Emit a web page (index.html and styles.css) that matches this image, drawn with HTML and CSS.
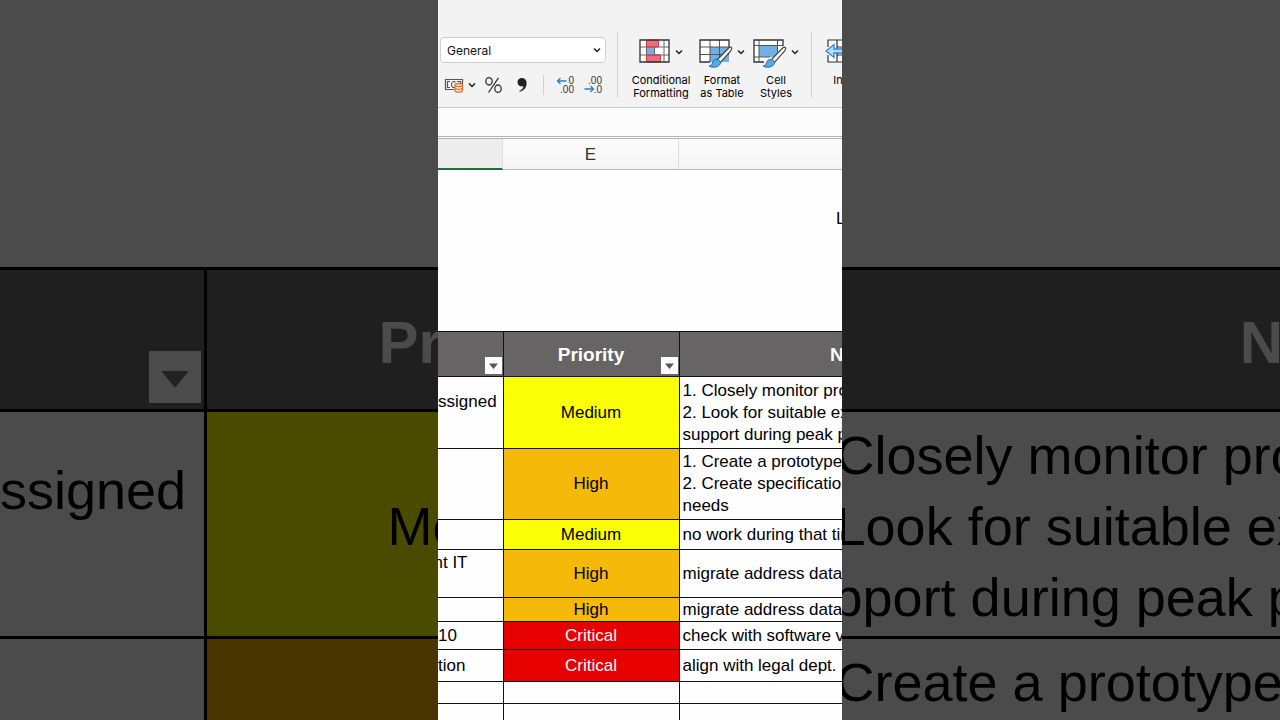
FILE: index.html
```html
<!DOCTYPE html>
<html lang="en">
<head>
    <meta charset="UTF-8">
    <meta name="viewport" content="width=device-width, initial-scale=1.0">
    <title>Risk Register</title>
    <link rel="stylesheet" href="styles.css">
</head>
<body>
    <!-- enlarged, dimmed copy of the sheet -->
    <div class="backdrop" aria-hidden="true">
        <table class="grid big">
            <colgroup><col class="col-d"><col class="col-e"><col class="col-f"></colgroup>
            <tr class="head">
                <th><span class="filter"><svg viewBox="0 0 17 17"><path d="M4 6.500h9L8.500 12z"/></svg></span></th>
                <th>Priority</th>
                <th>Notes</th>
            </tr>
            <tr class="r72">
                <td>ssigned<br>&nbsp;</td>
                <td class="medium">Medium</td>
                <td class="note">1. Closely monitor pro<br>2. Look for suitable ex<br>support during peak p</td>
            </tr>
            <tr class="r71">
                <td></td>
                <td class="high"></td>
                <td class="note">1. Create a prototype<br>&nbsp;<br>&nbsp;</td>
            </tr>
        </table>
    </div>

    <main class="stage">
        <div class="ribbon">
            <div class="number-group">
                <div class="select-box">
                    <select aria-label="Number format">
                        <option>General</option>
                    </select>
                    <svg class="chev" viewBox="0 0 8 8"><path d="M1 2.500l3 3 3-3"/></svg>
                </div>
                <div class="number-tools">
                    <button class="tool money" aria-label="Accounting format">
                        <svg width="20" height="16" viewBox="0 0 20 16" fill="none">
                            <path d="M10 12.500H1.500v-10h17V7" stroke="#555" stroke-width="1.200"/>
                            <path d="M6 4.500H3.500v6H6M11.500 5.200C9.500 3.800 7.500 5 7.500 7.500s1.500 3.500 3 2.800M13 4.500h3.500V7" stroke="#555" stroke-width="1.100"/>
                            <path d="M11 8v5.500c0 2.200 7.500 2.200 7.500 0V8" fill="#fbe9dc" stroke="#e0722e" stroke-width="1.300"/>
                            <ellipse cx="14.750" cy="8" rx="3.750" ry="1.500" fill="#fbe9dc" stroke="#e0722e" stroke-width="1.300"/>
                            <path d="M11 10.800c0 2 7.500 2 7.500 0" stroke="#e0722e" stroke-width="1.200"/>
                        </svg>
                        <svg class="chev" viewBox="0 0 8 8"><path d="M1 2.500l3 3 3-3"/></svg>
                    </button>
                    <button class="tool" aria-label="Percent">
                        <svg width="18" height="18" viewBox="0 0 18 18" fill="none" stroke="#333" stroke-width="1.300">
                            <ellipse cx="5" cy="5.300" rx="3.200" ry="3.700"/><ellipse cx="14" cy="12.700" rx="3.200" ry="3.700"/><path d="M14.500 1.800L4.500 16.500"/>
                        </svg>
                    </button>
                    <button class="tool comma" aria-label="Comma style">
                        <svg width="12" height="16" viewBox="0 0 12 16">
                            <path d="M5.700 1C8.800 1 10.600 3.200 10.600 6.200c0 4.300-2.700 7.300-7 8.600l-.4-.9c2.600-1 4.100-2.700 4.300-4.900-.5.300-1.100.4-1.800.4C3.200 9.400 1.500 7.600 1.500 5.300 1.500 2.800 3.300 1 5.700 1z" fill="#222"/>
                        </svg>
                    </button>
                    <span class="tool-sep"></span>
                    <button class="tool decimal" aria-label="Increase decimal">
                        <span class="digits">0<br>.00</span>
                        <svg class="arrow-up" width="11" height="8" viewBox="0 0 11 8"><path d="M10.500 4H1.500M4.500 1l-3 3 3 3"/></svg>
                    </button>
                    <button class="tool decimal" aria-label="Decrease decimal">
                        <span class="digits">.00<br>.0</span>
                        <svg class="arrow-down" width="11" height="8" viewBox="0 0 11 8"><path d="M.5 4h9M6.500 1l3 3-3 3"/></svg>
                    </button>
                </div>
            </div>
            <div class="style-group">
                <button class="big-btn cond">
                    <span class="icon-row">
                        <svg width="32" height="32" viewBox="0 0 32 32" fill="none">
                            <path d="M1 3h29v22H1z" fill="#fff"/>
                            <path d="M7.500 3h12v7h-12zM7.500 18h14v7h-14z" fill="#ef6a7c"/>
                            <path d="M7.500 10h8v8h-8z" fill="#6fb1e6"/>
                            <path d="M19.500 3v7H30M15.500 10v8H30M21.500 18v7M1 10h18.500M1 18h20.500M7.500 3v22M25 3v22" stroke="#666" stroke-width="1"/>
                            <path d="M7.500 3h12v7h-12zM7.500 18h14v7h-14z" stroke="#d43c50" stroke-width="1"/>
                            <path d="M1 3h29v22H1z" stroke="#333" stroke-width="1.300"/>
                        </svg>
                        <svg class="chev" viewBox="0 0 8 8"><path d="M1 2.500l3 3 3-3"/></svg>
                    </span>
                    Conditional<br>Formatting
                </button>
                <button class="big-btn">
                    <span class="icon-row">
                        <svg width="34" height="32" viewBox="0 0 34 32" fill="none">
                            <path d="M1 3h29v22H1z" fill="#fff"/>
                            <path d="M11 10h19v15H11z" fill="#6fb1e6"/>
                            <path d="M11 3v22M20.500 3v22M1 10h29M1 17.500h29" stroke="#555" stroke-width="1"/>
                            <path d="M30 10V3H1v22h10" stroke="#333" stroke-width="1.300"/>
                            <path d="M32.300 10.500c-1.300-.9-2.700.4-3.600 1.500L18 23l3.200 2.700L31.300 14.500c.9-1.300 2-3.200 1-4z" fill="#fff" stroke="#444" stroke-width="1.200"/>
                            <path d="M17.800 22.500c-2.500-.3-4 1.300-4.300 3.300-.2 1.700-1.500 2.800-3.500 3.200 3.500 2 9.500 1.800 11.500-2.500.7-2-1.500-3.800-3.700-4z" fill="#5ba7e2" stroke="#1c70b8" stroke-width="1"/>
                        </svg>
                        <svg class="chev" viewBox="0 0 8 8"><path d="M1 2.500l3 3 3-3"/></svg>
                    </span>
                    Format<br>as Table
                </button>
                <button class="big-btn">
                    <span class="icon-row">
                        <svg width="34" height="32" viewBox="0 0 34 32" fill="none">
                            <path d="M1 3h29v22H1z" fill="#fff"/>
                            <path d="M6 8.500h18.500V20H6z" fill="#6fb1e6"/>
                            <path d="M6 3v22M24.500 3v12M1 8.500h29M1 20h16" stroke="#555" stroke-width="1"/>
                            <path d="M30 9V3H1v22h10" stroke="#333" stroke-width="1.300"/>
                            <path d="M32.300 10.500c-1.300-.9-2.700.4-3.600 1.500L18 23l3.200 2.700L31.300 14.500c.9-1.300 2-3.200 1-4z" fill="#fff" stroke="#444" stroke-width="1.200"/>
                            <path d="M17.800 22.500c-2.500-.3-4 1.300-4.300 3.300-.2 1.700-1.500 2.800-3.500 3.200 3.500 2 9.500 1.800 11.500-2.500.7-2-1.500-3.800-3.700-4z" fill="#5ba7e2" stroke="#1c70b8" stroke-width="1"/>
                        </svg>
                        <svg class="chev" viewBox="0 0 8 8"><path d="M1 2.500l3 3 3-3"/></svg>
                    </span>
                    Cell<br>Styles
                </button>
            </div>
            <div class="cells-group">
                <button class="big-btn">
                    <span class="icon-row">
                        <svg width="34" height="32" viewBox="0 0 34 32" fill="none">
                            <path d="M3 3h29v22H3z" fill="#fff"/>
                            <path d="M3 10V3h29v22H3v-7M12 3v22M22 3v22M12 10h20M12 18h20" stroke="#333" stroke-width="1.200"/>
                            <path d="M1 14l8-6.500v4.500h16v4H9v4.500z" fill="#b9dcf7" stroke="#2e86cf" stroke-width="1.300"/>
                        </svg>
                        <svg class="chev" viewBox="0 0 8 8"><path d="M1 2.500l3 3 3-3"/></svg>
                    </span>
                    Insert
                </button>
            </div>
        </div>

        <div class="formula-bar"></div>

        <div class="col-heads">
            <div class="active"></div>
            <div>E</div>
            <div></div>
        </div>

        <table class="grid sheet">
            <colgroup><col class="col-d"><col class="col-e"><col class="col-f"></colgroup>
            <tr class="title-row"><td colspan="2"></td><td class="title">L</td></tr>
            <tr class="spacer-row"><td colspan="3"></td></tr>
            <tr class="head">
                <th><button class="filter" aria-label="Filter"><svg viewBox="0 0 17 17"><path d="M4 6.500h9L8.500 12z"/></svg></button></th>
                <th>Priority<button class="filter" aria-label="Filter priority"><svg viewBox="0 0 17 17"><path d="M4 6.500h9L8.500 12z"/></svg></button></th>
                <th>Notes</th>
            </tr>
            <tr class="r72">
                <td>ssigned<br>&nbsp;</td>
                <td class="medium">Medium</td>
                <td class="note">1. Closely monitor pro<br>2. Look for suitable ex<br>support during peak p</td>
            </tr>
            <tr class="r71">
                <td></td>
                <td class="high">High</td>
                <td class="note">1. Create a prototype<br>2. Create specificatio<br>needs</td>
            </tr>
            <tr class="r30">
                <td></td>
                <td class="medium">Medium</td>
                <td class="note">no work during that tim</td>
            </tr>
            <tr class="r48">
                <td class="cut">nt IT<br>&nbsp;</td>
                <td class="high">High</td>
                <td class="note">migrate address data</td>
            </tr>
            <tr class="r24">
                <td></td>
                <td class="high">High</td>
                <td class="note">migrate address data</td>
            </tr>
            <tr class="r28">
                <td>10</td>
                <td class="critical">Critical</td>
                <td class="note">check with software v</td>
            </tr>
            <tr class="r32">
                <td>tion</td>
                <td class="critical">Critical</td>
                <td class="note">align with legal dept.</td>
            </tr>
            <tr class="r22"><td></td><td></td><td></td></tr>
            <tr class="r24"><td></td><td></td><td></td></tr>
        </table>
    </main>
</body>
</html>
```
FILE: styles.css
```css
* {
    box-sizing: border-box;
}
body {
    margin: 0;
    height: 100vh;
    overflow: hidden;
    position: relative;
    display: grid;
    grid-template-columns: 438fr 404fr 438fr;
    background: #4b4b4b;
    font-family: "Liberation Sans", Arial, sans-serif;
    color: #000;
}
button {
    font: inherit;
    color: inherit;
    background: none;
    border: none;
    padding: 0;
    cursor: pointer;
}

/* tables */
.grid {
    table-layout: fixed;
    border-collapse: collapse;
}
.grid th, .grid td {
    position: relative;
    padding: 1px 0 0;
    border: 1px solid #111;
    white-space: nowrap;
    text-align: center;
}
.grid th { padding-top: 2px; }
.grid td:first-child, .grid .note {
    text-align: left;
}
.grid tr > :first-child {
    border-left: none;
}
.filter {
    position: absolute;
    display: block;
}
.filter svg {
    display: block;
    width: 100%;
}

/* backdrop */
.backdrop {
    position: absolute;
    inset: 0;
    overflow: hidden;
    padding-top: 267px;
}
.big {
    width: 1884px;
    font-size: 54px;
    line-height: 71px;
}
.big .col-d { width: 205px; }
.big .col-e { width: 557px; }
.big .col-f { width: 1122px; }
.big th, .big td {
    border: 3px solid #000;
    padding-top: 4px;
}
.big th {
    background: #1f1f1f;
    color: #4b4b4b;
    font-size: 60px;
    padding-top: 6px;
}
.big .note { padding-left: 12px; }
.big .head { height: 142px; }
.big .r72, .big .r71 { height: 227px; }
.big .medium { background: #4b4b00; }
.big .high { background: #483500; }
.big .filter {
    right: 3px;
    bottom: 6px;
    width: 52px;
    height: 52px;
    background: #4b4b4b;
}
.big .filter path { fill: #222; }

/* centre panel */
.stage {
    position: relative;
    grid-column: 2;
    min-width: 0;
    height: 100vh;
    overflow: hidden;
    background: #fefefe;
}
.ribbon {
    display: flex;
    height: 108px;
    padding-top: 32px;
    background: #f3f3f3;
    border-bottom: 1px solid #c8c8c8;
    font-family: Inter, sans-serif;
    font-size: 11px;
    line-height: 13px;
}
.number-group, .style-group {
    flex: none;
    height: 66px;
    border-right: 1px solid #d2d2d2;
}
.number-group {
    width: 180px;
    padding: 5px 11px 0 2px;
}
.select-box {
    position: relative;
}
.select-box select {
    display: block;
    width: 166px;
    height: 26px;
    padding: 0 6px;
    appearance: none;
    background: #fff;
    border: 1px solid #cfcfcf;
    border-radius: 4px;
    font: 12px Inter, sans-serif;
    color: #111;
}
.chev {
    flex: none;
    width: 8px;
    height: 8px;
    fill: none;
    stroke: #222;
    stroke-width: 1.5;
}
.select-box .chev {
    position: absolute;
    top: 9px;
    right: 5px;
}
.number-tools {
    display: flex;
    align-items: center;
    height: 44px;
    padding-left: 4px;
}
.tool {
    display: flex;
    align-items: center;
    flex: none;
}
.money {
    gap: 4px;
    margin-right: 8px;
}
.comma { margin: 0 15px 0 14px; }
.tool-sep {
    width: 1px;
    height: 20px;
    background: #cfcfcf;
}
.decimal {
    position: relative;
    width: 18px;
    margin-left: 12px;
    justify-content: flex-end;
}
.decimal + .decimal { margin-left: 10px; }
.digits {
    font: 10px/9px "Liberation Sans", sans-serif;
    text-align: right;
    color: #333;
}
.decimal svg {
    position: absolute;
    left: 0;
    fill: none;
    stroke: #2583c7;
    stroke-width: 1.3;
}
.arrow-up { top: 1px; }
.arrow-down { bottom: 1px; }
.style-group {
    display: flex;
    gap: 8px;
    width: 194px;
    padding-left: 13px;
}
.cells-group {
    padding-left: 13px;
}
.big-btn {
    flex: none;
    width: 46px;
    padding-top: 5px;
    text-align: center;
    white-space: nowrap;
    display: flex;
    flex-direction: column;
    align-items: center;
    align-self: flex-start;
}
.cond { width: 60px; }
.icon-row {
    display: flex;
    align-items: center;
    gap: 4px;
    height: 32px;
    margin-bottom: 5px;
}
.icon-row .chev { margin-bottom: 3px; }
.formula-bar {
    height: 31px;
    background: #fbfbfb;
    border-bottom: 3px double #b4b4b4;
}
.col-heads {
    display: flex;
    height: 31px;
    background: linear-gradient(#fbfbfb, #f5f5f5);
    border-bottom: 1px solid #bbb;
    font-size: 17px;
    line-height: 31px;
    text-align: center;
    color: #333;
}
.col-heads div {
    flex: none;
    width: 176px;
    border-right: 1px solid #dcdcdc;
}
.col-heads .active {
    width: 65px;
    height: 31px;
    background: #ededed;
    border-bottom: 2px solid #1e7330;
}

.sheet {
    width: 596px;
    font-size: 17px;
    line-height: 22px;
}
.sheet .col-d { width: 65px; }
.sheet .col-e { width: 176px; }
.sheet .col-f { width: 355px; }
.sheet th {
    background: #666465;
    color: #fff;
    font-size: 19px;
}
.sheet .filter {
    right: 1px;
    bottom: 2px;
    width: 17px;
    height: 17px;
    background: #fff;
}
.sheet .filter path { fill: #555; }
.sheet .note { padding-left: 3px; }
.sheet .cut {
    direction: rtl;
    padding-right: 35px;
}
.sheet .medium { background: #fbff05; }
.sheet .high { background: #f5b90a; }
.sheet .critical {
    background: #e60000;
    color: #fff;
}
.title-row { height: 96px; }
.spacer-row { height: 65px; }
.sheet .title-row td, .sheet .spacer-row td {
    border-width: 0;
}
.sheet .title {
    text-align: left;
    padding-left: 157px;
}
.sheet .head { height: 45px; }
.r72 { height: 72px; }
.r71 { height: 71px; }
.r48 { height: 48px; }
.r32 { height: 32px; }
.r30 { height: 30px; }
.r28 { height: 28px; }
.r24 { height: 24px; }
.r22 { height: 22px; }
```
